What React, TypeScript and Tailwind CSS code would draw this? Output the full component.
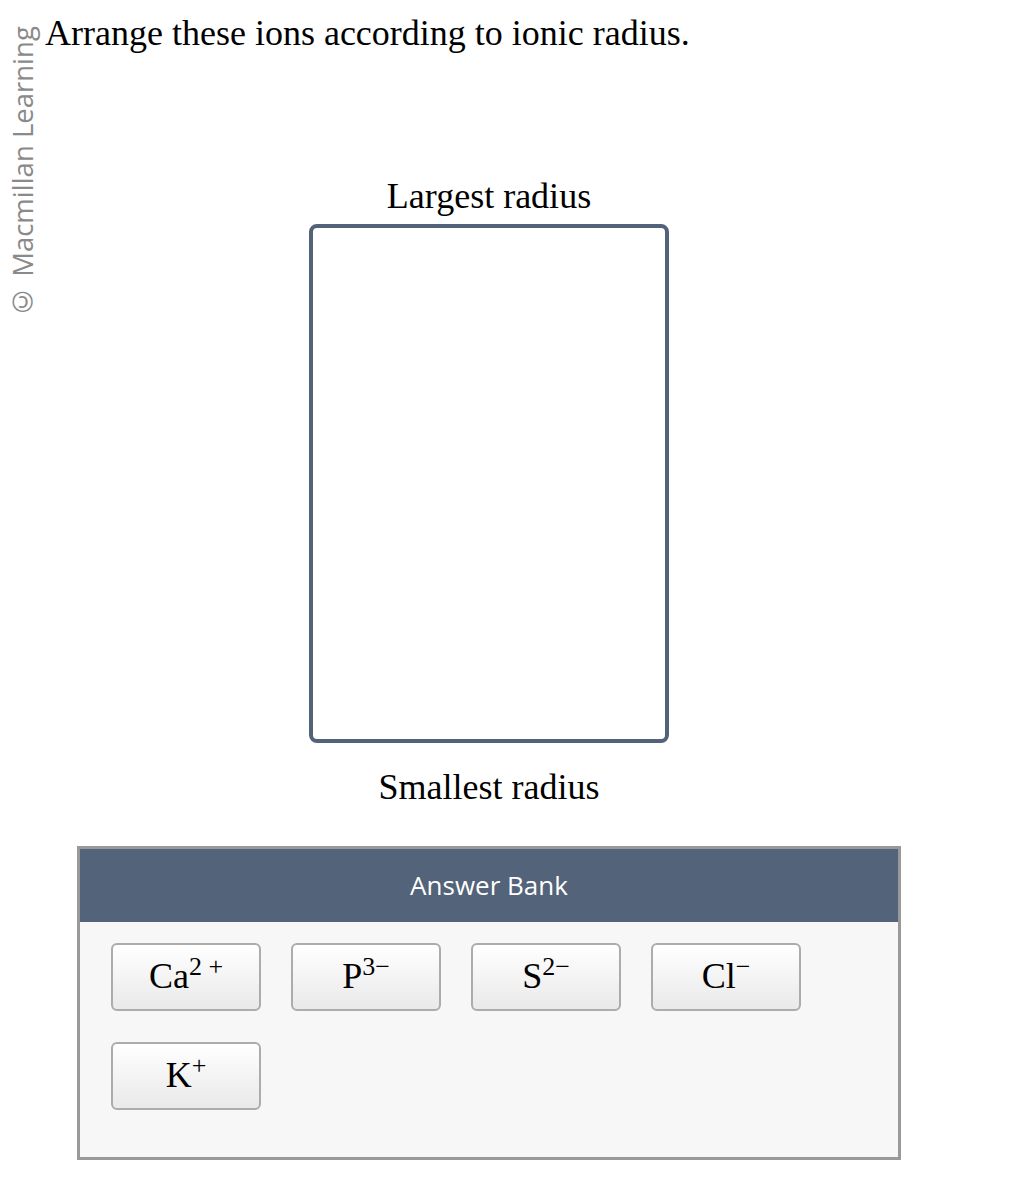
import React from 'react';

type Ion = { base: string; charge: string };

const ions: Ion[] = [
  { base: 'Ca', charge: '2 +' },
  { base: 'P', charge: '3−' },
  { base: 'S', charge: '2−' },
  { base: 'Cl', charge: '−' },
  { base: 'K', charge: '+' },
];

function IonTile({ ion }: { ion: Ion }) {
  return (
    <div className="w-[150px] h-[68px] flex items-center justify-center rounded-md border-2 border-[#acacac] bg-gradient-to-b from-white to-[#e9e9e9] text-[36px] text-black leading-none font-['Liberation_Serif',serif]">
      <span className="pb-[2px]">
        {ion.base}
        <sup className="text-[26px]">{ion.charge}</sup>
      </span>
    </div>
  );
}

export default function App() {
  return (
    <div className="w-[1018px] min-h-[1204px] bg-white flex font-['Liberation_Serif',serif]">
      <div className="w-[45px] shrink-0 flex justify-center pt-[29px]">
        <span className="[writing-mode:vertical-rl] rotate-180 h-[292px] text-[27.5px] leading-none text-[#8a8a8a] font-['Open_Sans',sans-serif] whitespace-nowrap">
          © Macmillan Learning
        </span>
      </div>

      <div className="flex-1">
        <h1 className="text-[36px] leading-none text-black pt-[15px]">
          Arrange these ions according to ionic radius.
        </h1>

        <div className="w-[824px] ml-[32px] flex flex-col items-center">
          <p className="mt-[127px] text-[36px] leading-none">Largest radius</p>
          <div className="mt-[10px] w-[360px] h-[519px] rounded-lg border-4 border-[#536279]" />
          <p className="mt-[26px] text-[36px] leading-none">Smallest radius</p>

          <div className="mt-[41px] w-full border-[3px] border-[#999999] bg-[#f7f7f7]">
            <div className="h-[73px] bg-[#536379] flex items-center justify-center text-white text-[26px] font-['Open_Sans',sans-serif]">
              Answer Bank
            </div>
            <div className="pt-[21px] pb-[47px] px-[31px] flex flex-wrap gap-x-[30px] gap-y-[31px]">
              {ions.map((ion) => (
                <IonTile key={ion.base} ion={ion} />
              ))}
            </div>
          </div>
        </div>
      </div>
    </div>
  );
}
